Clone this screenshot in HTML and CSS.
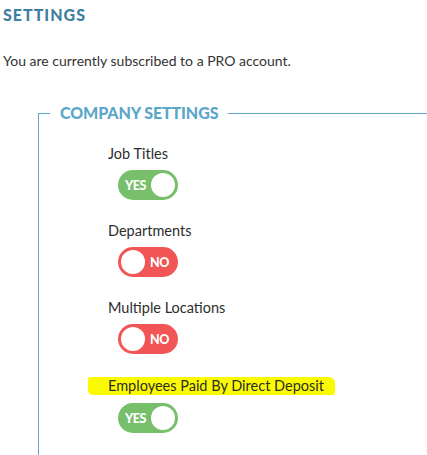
FILE: index.html
```html
<!DOCTYPE html>
<html>
<head>
<meta charset="utf-8">
<link rel="stylesheet" href="styles.css">
</head>
<body>
<h1 class="title">SETTINGS</h1>
<p class="intro">You are currently subscribed to a PRO account.</p>
<section class="group">
  <div class="legend">COMPANY SETTINGS</div>
  <div class="rows">
    <div class="row">
      <div class="label">Job Titles</div>
      <div class="toggle on"><span class="txt">YES</span><span class="knob"></span></div>
    </div>
    <div class="row">
      <div class="label">Departments</div>
      <div class="toggle off"><span class="knob"></span><span class="txt">NO</span></div>
    </div>
    <div class="row">
      <div class="label">Multiple Locations</div>
      <div class="toggle off"><span class="knob"></span><span class="txt">NO</span></div>
    </div>
    <div class="row">
      <div class="label"><span class="mark">Employees Paid By Direct Deposit</span></div>
      <div class="toggle on"><span class="txt">YES</span><span class="knob"></span></div>
    </div>
  </div>
</section>
</body>
</html>
```

FILE: styles.css
```css
html, body {
  margin: 0;
  padding: 0;
  background: #fff;
  overflow: hidden;
}
body {
  font-family: "Lato", "Noto Sans", sans-serif;
  color: #333;
  height: 455px;
}
.title {
  margin: 0;
  padding: 5px 0 0 3px;
  font-size: 16px;
  line-height: 20px;
  font-weight: 900;
  color: #3f80a1;
  letter-spacing: 1px;
}
.intro {
  margin: 0;
  padding: 27px 0 0 3px;
  font-size: 14px;
  line-height: 18px;
}
.group {
  margin: 43px 0 0 38px;
  border-left: 1px solid #5ba6c9;
  border-top: 1px solid #5ba6c9;
  height: 341px;
}
.legend {
  width: fit-content;
  background: #fff;
  margin: -11px 0 0 11px;
  padding: 0 10px;
  font-size: 16px;
  line-height: 20px;
  font-weight: 900;
  color: #5ba6c9;
  letter-spacing: -0.1px;
}
.rows {
  padding: 23px 0 0 69px;
  display: flex;
  flex-direction: column;
  gap: 23px;
}
.row {
  display: flex;
  flex-direction: column;
  align-items: flex-start;
  gap: 8px;
}
.label {
  font-size: 14.5px;
  line-height: 16px;
  color: #2d2d2d;
}
.mark {
  display: inline-block;
  background: #fbfb00;
  margin-left: -20px;
  padding: 1px 11px 1px 20px;
  border-radius: 2px 6px 3px 5px;
}
.toggle {
  margin-left: 10px;
  width: 60px;
  height: 30px;
  border-radius: 15px;
  display: flex;
  align-items: center;
  box-sizing: border-box;
  padding: 0 3px;
  gap: 5px;
}
.toggle.on {
  background: #77bf6b;
  justify-content: flex-end;
}
.toggle.off {
  background: #f25555;
  justify-content: flex-start;
}
.knob {
  width: 24px;
  height: 24px;
  border-radius: 50%;
  background: #fff;
  flex: none;
}
.txt {
  color: #fff;
  font-weight: 900;
  font-size: 12.5px;
  letter-spacing: -0.4px;
}
```
